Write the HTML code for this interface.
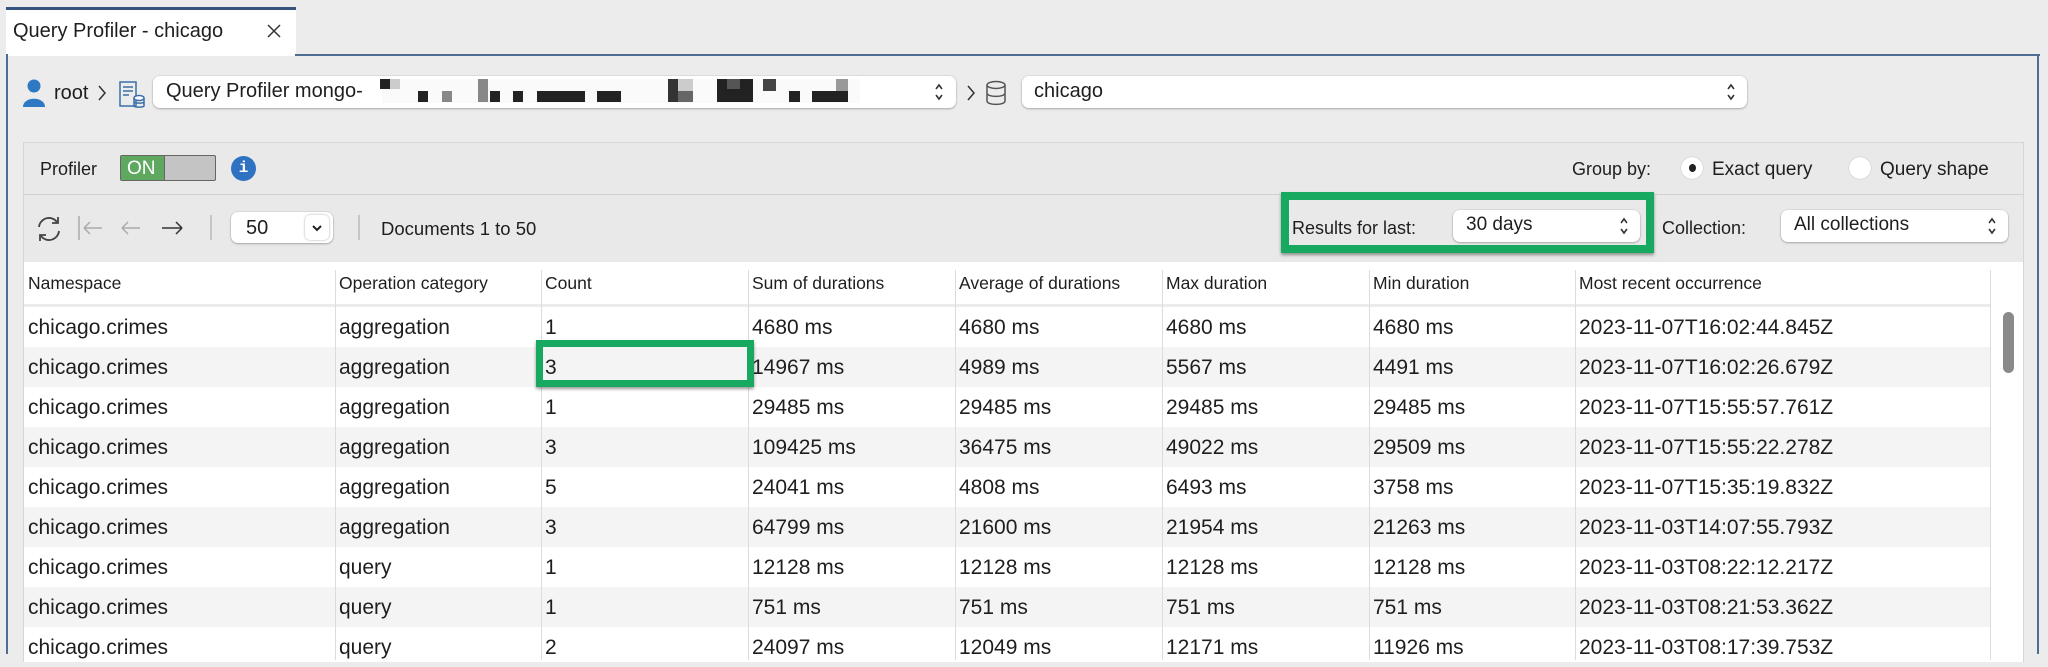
<!DOCTYPE html>
<html><head><meta charset="utf-8"><style>
*{box-sizing:border-box;margin:0;padding:0}
body{width:2048px;height:652px;overflow:hidden;background:#ececec;font-family:"Liberation Sans",Arial,sans-serif;color:#1e1e1e;position:relative}
.a{position:absolute;white-space:nowrap}
.combo{position:absolute;background:#fff;border-radius:7px;box-shadow:0 1px 2px rgba(0,0,0,.25),0 0 0 1px rgba(0,0,0,.05)}
.row{position:absolute;left:24px;width:1966px;height:40px;font-size:21px}
.row span{position:absolute;top:9px}
.hd span{position:absolute;top:11px;font-size:17.5px}
.vl{position:absolute;width:1px;background:#dcdcdc}
</style></head><body>
<!-- tab -->
<div class="a" style="left:6px;top:7px;width:290px;height:49px;background:#fff;border-top:3px solid #35547e"></div>
<div class="a" style="left:13px;top:20px;font-size:20px">Query Profiler - chicago</div>
<svg class="a" style="left:267px;top:24px" width="14" height="14" viewBox="0 0 14 14" stroke="#333" stroke-width="1.5"><path d="M1 1L13 13M13 1L1 13"/></svg>
<!-- main frame border -->
<div class="a" style="left:295px;top:54px;width:1745px;height:2px;background:#4f6d93"></div>
<div class="a" style="left:6px;top:54px;width:2px;height:600px;background:#4f6d93"></div>
<div class="a" style="left:2037px;top:54px;width:2px;height:600px;background:#4f6d93"></div>
<!-- breadcrumb -->
<svg class="a" style="left:22px;top:78px" width="24" height="30" viewBox="0 0 24 30"><circle cx="12" cy="8" r="6.5" fill="#2f78c4"/><path d="M1 29 C1 18 23 18 23 29Z" fill="#2f78c4"/></svg>
<div class="a" style="left:54px;top:82px;font-size:20px">root</div>
<svg class="a" style="left:97px;top:84px" width="10" height="18" viewBox="0 0 10 18" fill="none" stroke="#333" stroke-width="1.5"><path d="M2 2l6 7-6 7"/></svg>
<svg class="a" style="left:118px;top:80px" width="28" height="30" viewBox="0 0 28 30" fill="none" stroke="#3b6ea8" stroke-width="1.5"><rect x="2" y="2" width="16" height="24"/><path d="M5 7h10M5 11h10M5 15h6"/><ellipse cx="21" cy="18" rx="5" ry="2.5" fill="#fff"/><path d="M16 18v8c0 1.5 10 1.5 10 0v-8M16 22c0 1.5 10 1.5 10 0"/></svg>
<div class="combo" style="left:153px;top:76px;width:803px;height:32px"></div>
<div class="a" style="left:166px;top:80px;font-size:20px">Query Profiler mongo-</div>
<div class="a" style="left:382px;top:79px;width:478px;height:24px;background:#fafafa"></div>
<div class="a" style="left:380px;top:79px;width:10px;height:10px;background:#222"></div>
<div class="a" style="left:390px;top:79px;width:10px;height:10px;background:#ccc"></div>
<div class="a" style="left:418px;top:91px;width:10px;height:11px;background:#222"></div>
<div class="a" style="left:442px;top:91px;width:10px;height:11px;background:#888"></div>
<div class="a" style="left:478px;top:79px;width:10px;height:23px;background:#888"></div>
<div class="a" style="left:490px;top:91px;width:10px;height:11px;background:#222"></div>
<div class="a" style="left:513px;top:91px;width:10px;height:11px;background:#222"></div>
<div class="a" style="left:537px;top:91px;width:48px;height:11px;background:#222"></div>
<div class="a" style="left:597px;top:91px;width:24px;height:11px;background:#222"></div>
<div class="a" style="left:668px;top:79px;width:10px;height:23px;background:#333"></div>
<div class="a" style="left:678px;top:79px;width:15px;height:12px;background:#ccc"></div>
<div class="a" style="left:678px;top:91px;width:15px;height:11px;background:#666"></div>
<div class="a" style="left:717px;top:79px;width:36px;height:23px;background:#222"></div>
<div class="a" style="left:727px;top:79px;width:13px;height:10px;background:#555"></div>
<div class="a" style="left:763px;top:79px;width:13px;height:12px;background:#444"></div>
<div class="a" style="left:789px;top:91px;width:11px;height:11px;background:#222"></div>
<div class="a" style="left:812px;top:91px;width:36px;height:11px;background:#222"></div>
<div class="a" style="left:836px;top:79px;width:12px;height:12px;background:#999"></div>
<svg class="a" style="left:934px;top:83px" width="10" height="18" viewBox="0 0 10 18" fill="none" stroke="#333" stroke-width="1.6"><path d="M2 6l3-4 3 4M2 12l3 4 3-4"/></svg>
<svg class="a" style="left:966px;top:84px" width="10" height="18" viewBox="0 0 10 18" fill="none" stroke="#333" stroke-width="1.5"><path d="M2 2l6 7-6 7"/></svg>
<svg class="a" style="left:985px;top:80px" width="22" height="26" viewBox="0 0 22 26" fill="none" stroke="#555" stroke-width="1.5"><ellipse cx="11" cy="5" rx="9" ry="3.5"/><path d="M2 5v16c0 4.5 18 4.5 18 0V5M2 13c0 4.5 18 4.5 18 0"/></svg>
<div class="combo" style="left:1022px;top:76px;width:725px;height:32px"></div>
<div class="a" style="left:1034px;top:80px;font-size:20px">chicago</div>
<svg class="a" style="left:1726px;top:83px" width="10" height="18" viewBox="0 0 10 18" fill="none" stroke="#333" stroke-width="1.6"><path d="M2 6l3-4 3 4M2 12l3 4 3-4"/></svg>
<!-- panel -->
<div class="a" style="left:23px;top:142px;width:2001px;height:520px;background:#e9e9e9;border:1px solid #d6d6d6"></div>
<div class="a" style="left:24px;top:194px;width:1999px;height:1px;background:#d2d2d2"></div>
<div class="a" style="left:40px;top:159px;font-size:18px">Profiler</div>
<div class="a" style="left:120px;top:155px;width:96px;height:26px;background:#c4c4c4;border:1px solid #666;border-radius:2px"></div>
<div class="a" style="left:121px;top:156px;width:44px;height:24px;background:#5ea860;color:#fff;font-size:19px;padding:2px 0 0 6px;border-right:1px solid #666">ON</div>
<div class="a" style="left:231px;top:156px;width:25px;height:25px;border-radius:50%;background:#2f72c2;color:#fff;font-size:16px;font-weight:bold;text-align:center;line-height:25px;font-family:'Liberation Mono',monospace">i</div>
<div class="a" style="left:1572px;top:159px;font-size:18px">Group by:</div>
<div class="a" style="left:1681px;top:157px;width:22px;height:22px;border-radius:50%;background:#fff;box-shadow:0 0 1px rgba(0,0,0,.4)"></div>
<div class="a" style="left:1689px;top:164px;width:7px;height:8px;border-radius:50%;background:#222"></div>
<div class="a" style="left:1712px;top:159px;font-size:19px">Exact query</div>
<div class="a" style="left:1849px;top:157px;width:22px;height:22px;border-radius:50%;background:#fff;box-shadow:0 0 1px rgba(0,0,0,.4)"></div>
<div class="a" style="left:1880px;top:159px;font-size:19px">Query shape</div>
<!-- toolbar -->
<svg class="a" style="left:34px;top:214px" width="30" height="30" viewBox="0 0 30 30" fill="none" stroke="#444" stroke-width="1.8"><path d="M5 13a10 10 0 0 1 18-5M25 17a10 10 0 0 1-18 5"/><path d="M24 3v6h-6M6 27v-6h6"/></svg>
<svg class="a" style="left:78px;top:215px" width="130" height="26" viewBox="0 0 130 26" fill="none" stroke-width="1.5"><path d="M1 1v24" stroke="#aaa"/><path d="M6 13h18M6 13l6-6M6 13l6 6" stroke="#aaa"/><path d="M44 13h18M44 13l6-6M44 13l6 6" stroke="#aaa"/><path d="M84 13h20M104 13l-6-6M104 13l-6 6" stroke="#333"/></svg>
<div class="a" style="left:210px;top:215px;width:1.5px;height:25px;background:#c6c6c6"></div>
<div class="combo" style="left:231px;top:212px;width:102px;height:31px"></div>
<div class="a" style="left:246px;top:217px;font-size:20px">50</div>
<div class="a" style="left:305px;top:215px;width:24px;height:25px;background:#fff;border-radius:5px;box-shadow:0 0 2px rgba(0,0,0,.35)"></div>
<svg class="a" style="left:311px;top:224px" width="12" height="8" viewBox="0 0 12 8" fill="none" stroke="#222" stroke-width="2"><path d="M2 2l4 4 4-4"/></svg>
<div class="a" style="left:358px;top:215px;width:1.5px;height:25px;background:#c6c6c6"></div>
<div class="a" style="left:381px;top:218px;font-size:18.5px">Documents 1 to 50</div>
<div class="a" style="left:1281px;top:192px;width:373px;height:61px;border:8px solid #17a95f;box-shadow:0 2px 3px rgba(0,0,0,.4)"></div>
<div class="a" style="left:1292px;top:218px;font-size:18px">Results for last:</div>
<div class="combo" style="left:1453px;top:210px;width:187px;height:32px"></div>
<div class="a" style="left:1466px;top:214px;font-size:19px">30 days</div>
<svg class="a" style="left:1619px;top:217px" width="10" height="18" viewBox="0 0 10 18" fill="none" stroke="#333" stroke-width="1.6"><path d="M2 6l3-4 3 4M2 12l3 4 3-4"/></svg>
<div class="a" style="left:1662px;top:218px;font-size:18px">Collection:</div>
<div class="combo" style="left:1781px;top:210px;width:227px;height:32px"></div>
<div class="a" style="left:1794px;top:214px;font-size:19px">All collections</div>
<svg class="a" style="left:1987px;top:217px" width="10" height="18" viewBox="0 0 10 18" fill="none" stroke="#333" stroke-width="1.6"><path d="M2 6l3-4 3 4M2 12l3 4 3-4"/></svg>
<!-- table -->
<div class="a" style="left:24px;top:262px;width:1999px;height:400px;background:#fff"></div>
<div class="a" style="left:24px;top:304px;width:1966px;height:3px;background:#ececec"></div>
<div class="row hd" style="top:262px;height:42px"><span style="left:4px">Namespace</span><span style="left:315px">Operation category</span><span style="left:521px">Count</span><span style="left:728px">Sum of durations</span><span style="left:935px">Average of durations</span><span style="left:1142px">Max duration</span><span style="left:1349px">Min duration</span><span style="left:1555px">Most recent occurrence</span></div>
<div class="row" style="top:307px"><span style="left:4px">chicago.crimes</span><span style="left:315px">aggregation</span><span style="left:521px">1</span><span style="left:728px">4680 ms</span><span style="left:935px">4680 ms</span><span style="left:1142px">4680 ms</span><span style="left:1349px">4680 ms</span><span style="left:1555px">2023-11-07T16:02:44.845Z</span></div>
<div class="row" style="top:347px;background:#f4f4f4"><span style="left:4px">chicago.crimes</span><span style="left:315px">aggregation</span><span style="left:521px">3</span><span style="left:728px">14967 ms</span><span style="left:935px">4989 ms</span><span style="left:1142px">5567 ms</span><span style="left:1349px">4491 ms</span><span style="left:1555px">2023-11-07T16:02:26.679Z</span></div>
<div class="row" style="top:387px"><span style="left:4px">chicago.crimes</span><span style="left:315px">aggregation</span><span style="left:521px">1</span><span style="left:728px">29485 ms</span><span style="left:935px">29485 ms</span><span style="left:1142px">29485 ms</span><span style="left:1349px">29485 ms</span><span style="left:1555px">2023-11-07T15:55:57.761Z</span></div>
<div class="row" style="top:427px;background:#f4f4f4"><span style="left:4px">chicago.crimes</span><span style="left:315px">aggregation</span><span style="left:521px">3</span><span style="left:728px">109425 ms</span><span style="left:935px">36475 ms</span><span style="left:1142px">49022 ms</span><span style="left:1349px">29509 ms</span><span style="left:1555px">2023-11-07T15:55:22.278Z</span></div>
<div class="row" style="top:467px"><span style="left:4px">chicago.crimes</span><span style="left:315px">aggregation</span><span style="left:521px">5</span><span style="left:728px">24041 ms</span><span style="left:935px">4808 ms</span><span style="left:1142px">6493 ms</span><span style="left:1349px">3758 ms</span><span style="left:1555px">2023-11-07T15:35:19.832Z</span></div>
<div class="row" style="top:507px;background:#f4f4f4"><span style="left:4px">chicago.crimes</span><span style="left:315px">aggregation</span><span style="left:521px">3</span><span style="left:728px">64799 ms</span><span style="left:935px">21600 ms</span><span style="left:1142px">21954 ms</span><span style="left:1349px">21263 ms</span><span style="left:1555px">2023-11-03T14:07:55.793Z</span></div>
<div class="row" style="top:547px"><span style="left:4px">chicago.crimes</span><span style="left:315px">query</span><span style="left:521px">1</span><span style="left:728px">12128 ms</span><span style="left:935px">12128 ms</span><span style="left:1142px">12128 ms</span><span style="left:1349px">12128 ms</span><span style="left:1555px">2023-11-03T08:22:12.217Z</span></div>
<div class="row" style="top:587px;background:#f4f4f4"><span style="left:4px">chicago.crimes</span><span style="left:315px">query</span><span style="left:521px">1</span><span style="left:728px">751 ms</span><span style="left:935px">751 ms</span><span style="left:1142px">751 ms</span><span style="left:1349px">751 ms</span><span style="left:1555px">2023-11-03T08:21:53.362Z</span></div>
<div class="row" style="top:627px"><span style="left:4px">chicago.crimes</span><span style="left:315px">query</span><span style="left:521px">2</span><span style="left:728px">24097 ms</span><span style="left:935px">12049 ms</span><span style="left:1142px">12171 ms</span><span style="left:1349px">11926 ms</span><span style="left:1555px">2023-11-03T08:17:39.753Z</span></div>
<div class="vl" style="left:335px;top:270px;height:390px"></div>
<div class="vl" style="left:541px;top:270px;height:390px"></div>
<div class="vl" style="left:748px;top:270px;height:390px"></div>
<div class="vl" style="left:955px;top:270px;height:390px"></div>
<div class="vl" style="left:1162px;top:270px;height:390px"></div>
<div class="vl" style="left:1369px;top:270px;height:390px"></div>
<div class="vl" style="left:1575px;top:270px;height:390px"></div>
<div class="vl" style="left:1990px;top:270px;height:390px"></div>
<div class="a" style="left:2003px;top:312px;width:11px;height:61px;border-radius:6px;background:#8a8a8a"></div>
<div class="a" style="left:536px;top:340px;width:218px;height:47px;border:7px solid #17a95f;box-shadow:0 2px 3px rgba(0,0,0,.4)"></div>
</body></html>
